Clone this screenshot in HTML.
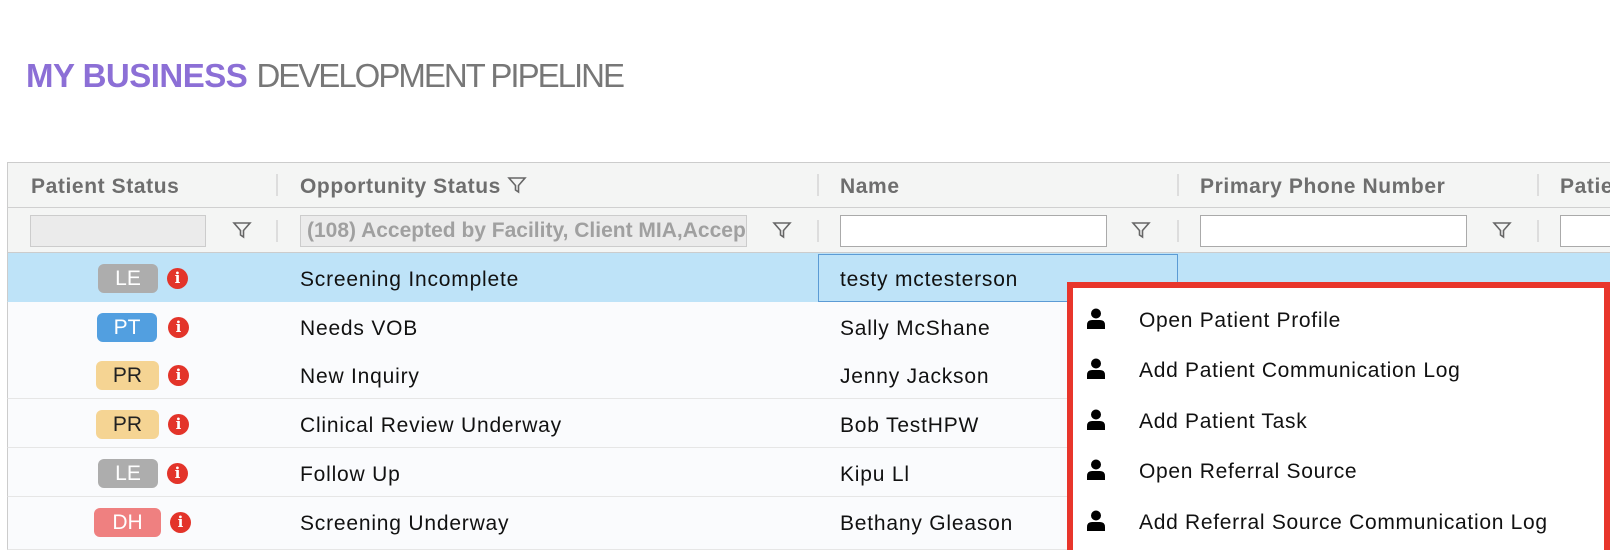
<!DOCTYPE html>
<html><head><meta charset="utf-8"><style>
*{margin:0;padding:0;box-sizing:border-box}
html,body{width:1610px;height:550px;overflow:hidden}
body{background:#fff;font-family:"Liberation Sans",sans-serif;position:relative}
.abs{position:absolute}
.title{left:26px;top:58px;font-size:33px;white-space:nowrap;line-height:36px}
.title b{color:#8c6fd6;letter-spacing:-0.5px}
.title span{color:#777;letter-spacing:-2px}
.hdr{left:7px;top:162px;width:1603px;height:46px;background:#f4f5f4;border-top:1px solid #ccc;border-left:1px solid #ccc;border-bottom:1px solid #d0d0d0}
.flt{left:7px;top:208px;width:1603px;height:45px;background:#f4f5f4;border-left:1px solid #ccc;border-bottom:1px solid #ccc}
.ht{font-size:21px;font-weight:bold;color:#6e6e6e;top:175px;white-space:nowrap;letter-spacing:0.6px}
.vd{width:2px;background:#ddd}
.inp{height:32px;top:215px;border:1px solid #aaa;background:#fff}
.row{left:7px;width:1603px;height:49px;border-left:1px solid #ccc;border-bottom:1px solid #e6e6e6;background:#fafbfd}
.cell{font-size:21px;color:#111;white-space:nowrap;letter-spacing:0.8px}
.badge{height:29px;border-radius:6px;font-size:21px;text-align:center;line-height:29px;color:#fff;width:60px}
.info{width:21px;height:21px;border-radius:50%;background:#e3342a;color:#fff;font-weight:bold;font-size:15px;text-align:center;line-height:21px;font-family:"DejaVu Serif",serif}
.menu{left:1067px;top:282px;width:543px;height:268px;border:6px solid #e8352b;border-bottom:none;background:#fff}
.mi{left:1139px;font-size:21px;color:#111;white-space:nowrap;letter-spacing:0.7px}
.ic{left:1086px}
</style></head><body>
<div class="abs title"><b>MY BUSINESS</b> <span>DEVELOPMENT PIPELINE</span></div>

<div class="abs hdr"></div>
<div class="abs flt"></div>
<div class="abs ht" style="left:31px">Patient Status</div>
<div class="abs ht" style="left:300px">Opportunity Status <svg width="20" height="18" viewBox="0 0 20 18" style="vertical-align:-1px"><path d="M2 2H18L11.5 9.5V16L8.5 14V9.5Z" fill="none" stroke="#666" stroke-width="1.6"/></svg></div>
<div class="abs ht" style="left:840px">Name</div>
<div class="abs ht" style="left:1200px">Primary Phone Number</div>
<div class="abs ht" style="left:1560px;width:50px;overflow:hidden">Patient</div>
<div class="abs vd" style="left:276px;top:174px;height:22px"></div>
<div class="abs vd" style="left:817px;top:174px;height:22px"></div>
<div class="abs vd" style="left:1177px;top:174px;height:22px"></div>
<div class="abs vd" style="left:1537px;top:174px;height:22px"></div>
<div class="abs vd" style="left:276px;top:220px;height:22px"></div>
<div class="abs vd" style="left:817px;top:220px;height:22px"></div>
<div class="abs vd" style="left:1177px;top:220px;height:22px"></div>
<div class="abs vd" style="left:1537px;top:220px;height:22px"></div>

<div class="abs inp" style="left:30px;width:176px;background:#ebebeb;border-color:#ccc"></div>
<div class="abs inp" style="left:300px;width:447px;background:#ebebeb;border-color:#ccc;font-size:21px;font-weight:bold;color:#a0a0a0;line-height:30px;padding-left:6px;overflow:hidden;white-space:nowrap">(108) Accepted by Facility, Client MIA,Accepted</div>
<div class="abs inp" style="left:840px;width:267px"></div>
<div class="abs inp" style="left:1200px;width:267px"></div>
<div class="abs inp" style="left:1560px;width:50px;border-right:none"></div>
<svg class="abs" style="left:232px;top:220px" width="20" height="20" viewBox="0 0 20 20"><path d="M2 3H18L11.5 10.5V17L8.5 15V10.5Z" fill="none" stroke="#666" stroke-width="1.6"/></svg>
<svg class="abs" style="left:772px;top:220px" width="20" height="20" viewBox="0 0 20 20"><path d="M2 3H18L11.5 10.5V17L8.5 15V10.5Z" fill="none" stroke="#666" stroke-width="1.6"/></svg>
<svg class="abs" style="left:1131px;top:220px" width="20" height="20" viewBox="0 0 20 20"><path d="M2 3H18L11.5 10.5V17L8.5 15V10.5Z" fill="none" stroke="#666" stroke-width="1.6"/></svg>
<svg class="abs" style="left:1492px;top:220px" width="20" height="20" viewBox="0 0 20 20"><path d="M2 3H18L11.5 10.5V17L8.5 15V10.5Z" fill="none" stroke="#666" stroke-width="1.6"/></svg>

<div class="abs row" style="top:253px;background:#bee3f8;border-bottom-color:#bee3f8"></div>
<div class="abs row" style="top:302px"></div>
<div class="abs row" style="top:350px"></div>
<div class="abs row" style="top:399px"></div>
<div class="abs row" style="top:448px"></div>
<div class="abs row" style="top:497px;height:53px"></div>
<div class="abs" style="left:818px;top:254px;width:360px;height:48px;border:1px solid #5b9bd5"></div>

<div class="abs badge" style="left:98px;top:264px;background:#adadad">LE</div><div class="abs info" style="left:167px;top:268px">i</div>
<div class="abs badge" style="left:97px;top:313px;background:#529fe0">PT</div><div class="abs info" style="left:168px;top:317px">i</div>
<div class="abs badge" style="left:96px;top:361px;background:#f5d493;color:#222;width:63px">PR</div><div class="abs info" style="left:168px;top:365px">i</div>
<div class="abs badge" style="left:96px;top:410px;background:#f5d493;color:#222;width:63px">PR</div><div class="abs info" style="left:168px;top:414px">i</div>
<div class="abs badge" style="left:98px;top:459px;background:#adadad">LE</div><div class="abs info" style="left:167px;top:463px">i</div>
<div class="abs badge" style="left:94px;top:508px;background:#ef8080;width:67px">DH</div><div class="abs info" style="left:170px;top:512px">i</div>

<div class="abs cell" style="left:300px;top:268px">Screening Incomplete</div>
<div class="abs cell" style="left:300px;top:317px">Needs VOB</div>
<div class="abs cell" style="left:300px;top:365px">New Inquiry</div>
<div class="abs cell" style="left:300px;top:414px">Clinical Review Underway</div>
<div class="abs cell" style="left:300px;top:463px">Follow Up</div>
<div class="abs cell" style="left:300px;top:512px">Screening Underway</div>
<div class="abs cell" style="left:840px;top:268px">testy mctesterson</div>
<div class="abs cell" style="left:840px;top:317px">Sally McShane</div>
<div class="abs cell" style="left:840px;top:365px">Jenny Jackson</div>
<div class="abs cell" style="left:840px;top:414px">Bob TestHPW</div>
<div class="abs cell" style="left:840px;top:463px">Kipu Ll</div>
<div class="abs cell" style="left:840px;top:512px">Bethany Gleason</div>

<div class="abs menu"></div>
<svg class="abs ic" style="top:308px" width="20" height="22" viewBox="0 0 20 22"><circle cx="10" cy="5.5" r="5" fill="#000"/><path d="M1 21V17Q1 12 6 12H14Q19 12 19 17V21Z" fill="#000"/></svg>
<svg class="abs ic" style="top:358px" width="20" height="22" viewBox="0 0 20 22"><circle cx="10" cy="5.5" r="5" fill="#000"/><path d="M1 21V17Q1 12 6 12H14Q19 12 19 17V21Z" fill="#000"/></svg>
<svg class="abs ic" style="top:409px" width="20" height="22" viewBox="0 0 20 22"><circle cx="10" cy="5.5" r="5" fill="#000"/><path d="M1 21V17Q1 12 6 12H14Q19 12 19 17V21Z" fill="#000"/></svg>
<svg class="abs ic" style="top:459px" width="20" height="22" viewBox="0 0 20 22"><circle cx="10" cy="5.5" r="5" fill="#000"/><path d="M1 21V17Q1 12 6 12H14Q19 12 19 17V21Z" fill="#000"/></svg>
<svg class="abs ic" style="top:510px" width="20" height="22" viewBox="0 0 20 22"><circle cx="10" cy="5.5" r="5" fill="#000"/><path d="M1 21V17Q1 12 6 12H14Q19 12 19 17V21Z" fill="#000"/></svg>
<div class="abs mi" style="top:309px">Open Patient Profile</div>
<div class="abs mi" style="top:359px">Add Patient Communication Log</div>
<div class="abs mi" style="top:410px">Add Patient Task</div>
<div class="abs mi" style="top:460px">Open Referral Source</div>
<div class="abs mi" style="top:511px">Add Referral Source Communication Log</div>
</body></html>
